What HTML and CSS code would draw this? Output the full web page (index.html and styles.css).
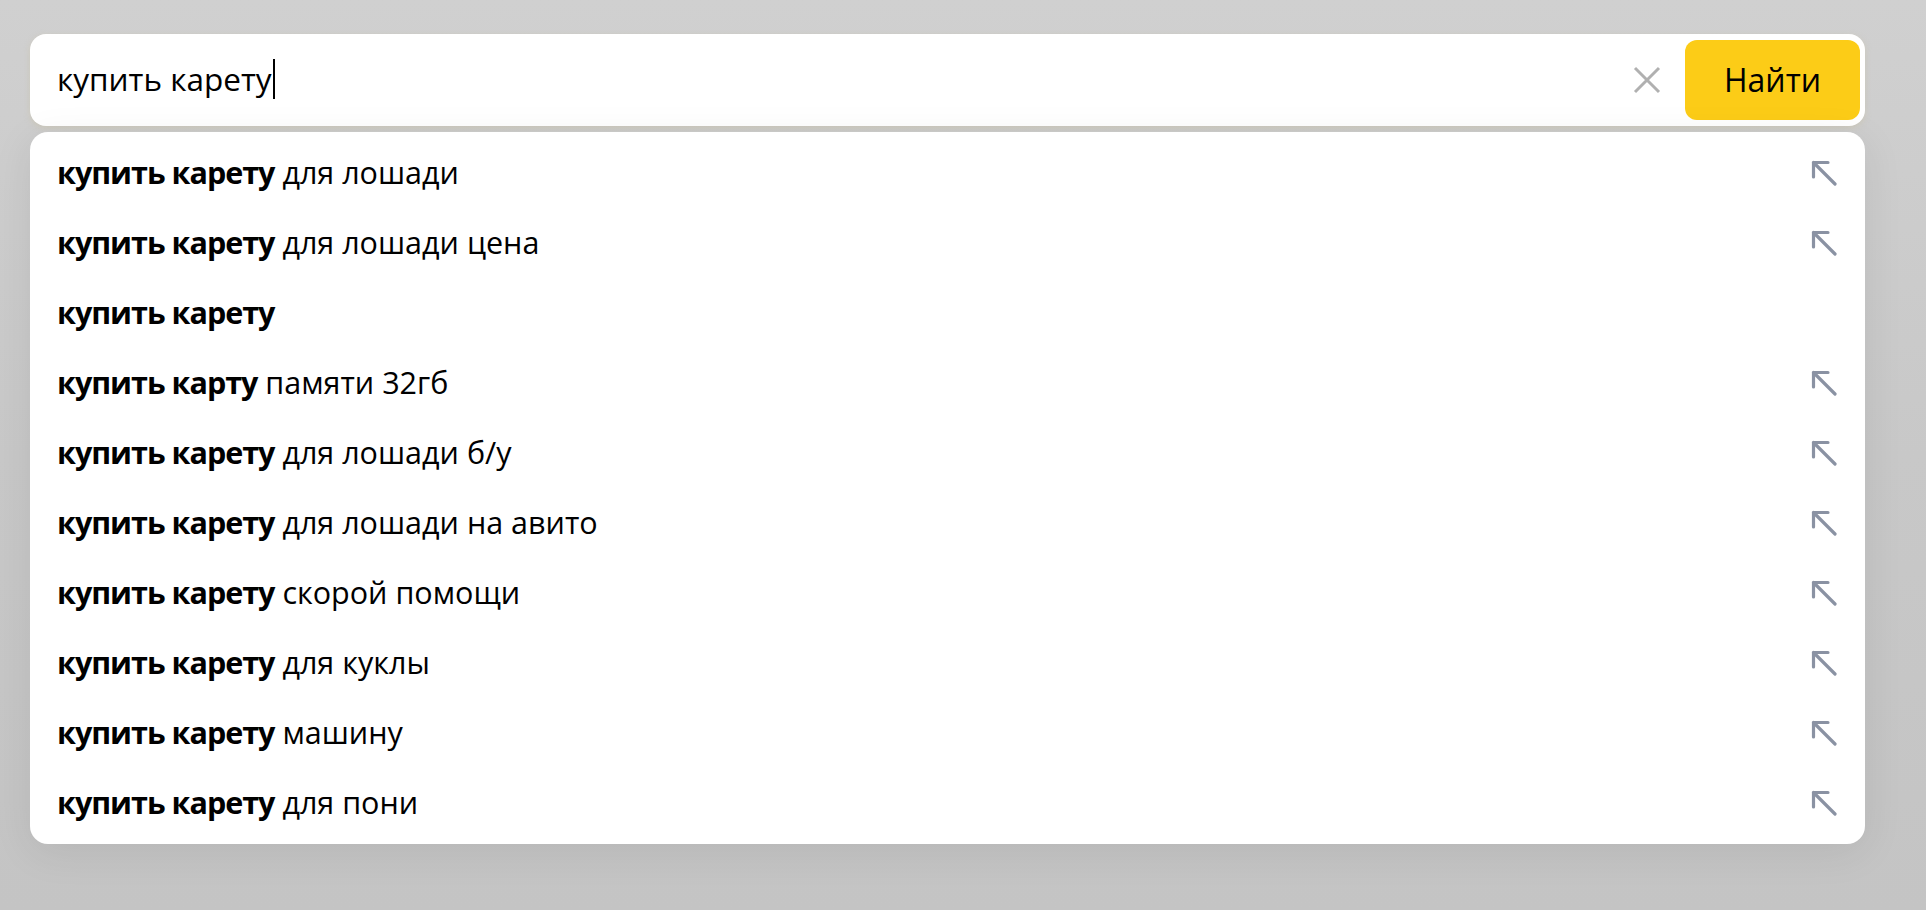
FILE: index.html
```html
<!DOCTYPE html>
<html lang="ru">
<head>
<meta charset="utf-8">
<title>Поиск</title>
<link rel="stylesheet" href="styles.css">
</head>
<body>
<div class="wrap">
  <form class="search">
    <div class="field"><span class="query">купить карету</span><span class="caret"></span></div>
    <span class="clear"><svg width="28" height="28" viewBox="0 0 28 28"><path d="M2 2 L26 26 M26 2 L2 26" stroke="#b0b0b0" stroke-width="3" fill="none"/></svg></span>
    <button class="btn" type="button">Найти</button>
  </form>
  <ul class="suggest">
    <li class="item"><span class="text"><b>купить карету</b> для лошади</span><span class="arrow"><svg width="26" height="26" viewBox="0 0 26 26"><path d="M2.5 17 V2.5 H17 M2.5 2.5 L24 24" stroke="#8a92a3" stroke-width="3.2" stroke-linecap="round" stroke-linejoin="round" fill="none"/></svg></span></li>
    <li class="item"><span class="text"><b>купить карету</b> для лошади цена</span><span class="arrow"><svg width="26" height="26" viewBox="0 0 26 26"><path d="M2.5 17 V2.5 H17 M2.5 2.5 L24 24" stroke="#8a92a3" stroke-width="3.2" stroke-linecap="round" stroke-linejoin="round" fill="none"/></svg></span></li>
    <li class="item"><span class="text"><b>купить карету</b></span></li>
    <li class="item"><span class="text"><b>купить карту</b> памяти 32гб</span><span class="arrow"><svg width="26" height="26" viewBox="0 0 26 26"><path d="M2.5 17 V2.5 H17 M2.5 2.5 L24 24" stroke="#8a92a3" stroke-width="3.2" stroke-linecap="round" stroke-linejoin="round" fill="none"/></svg></span></li>
    <li class="item"><span class="text"><b>купить карету</b> для лошади б/у</span><span class="arrow"><svg width="26" height="26" viewBox="0 0 26 26"><path d="M2.5 17 V2.5 H17 M2.5 2.5 L24 24" stroke="#8a92a3" stroke-width="3.2" stroke-linecap="round" stroke-linejoin="round" fill="none"/></svg></span></li>
    <li class="item"><span class="text"><b>купить карету</b> для лошади на авито</span><span class="arrow"><svg width="26" height="26" viewBox="0 0 26 26"><path d="M2.5 17 V2.5 H17 M2.5 2.5 L24 24" stroke="#8a92a3" stroke-width="3.2" stroke-linecap="round" stroke-linejoin="round" fill="none"/></svg></span></li>
    <li class="item"><span class="text"><b>купить карету</b> скорой помощи</span><span class="arrow"><svg width="26" height="26" viewBox="0 0 26 26"><path d="M2.5 17 V2.5 H17 M2.5 2.5 L24 24" stroke="#8a92a3" stroke-width="3.2" stroke-linecap="round" stroke-linejoin="round" fill="none"/></svg></span></li>
    <li class="item"><span class="text"><b>купить карету</b> для куклы</span><span class="arrow"><svg width="26" height="26" viewBox="0 0 26 26"><path d="M2.5 17 V2.5 H17 M2.5 2.5 L24 24" stroke="#8a92a3" stroke-width="3.2" stroke-linecap="round" stroke-linejoin="round" fill="none"/></svg></span></li>
    <li class="item"><span class="text"><b>купить карету</b> машину</span><span class="arrow"><svg width="26" height="26" viewBox="0 0 26 26"><path d="M2.5 17 V2.5 H17 M2.5 2.5 L24 24" stroke="#8a92a3" stroke-width="3.2" stroke-linecap="round" stroke-linejoin="round" fill="none"/></svg></span></li>
    <li class="item"><span class="text"><b>купить карету</b> для пони</span><span class="arrow"><svg width="26" height="26" viewBox="0 0 26 26"><path d="M2.5 17 V2.5 H17 M2.5 2.5 L24 24" stroke="#8a92a3" stroke-width="3.2" stroke-linecap="round" stroke-linejoin="round" fill="none"/></svg></span></li>
  </ul>
</div>
</body>
</html>
```

FILE: styles.css
```css
html, body {
  margin: 0;
  height: 100%;
}
body {
  background: linear-gradient(180deg, #d0d0d0 0%, #c8c8c8 50%, #c4c4c4 100%);
  font-family: "Open Sans", "Noto Sans", sans-serif;
  color: #000;
}
.wrap {
  padding: 34px 61px 0 30px;
  display: flex;
  flex-direction: column;
  gap: 6px;
}
.search {
  margin: 0;
  height: 92px;
  box-sizing: border-box;
  background: #fff;
  border-radius: 16px;
  display: flex;
  align-items: center;
  padding: 6px 5px 6px 27px;
  box-shadow: 0 2px 6px rgba(200, 190, 150, 0.35);
}
.field {
  flex: 1;
  display: flex;
  align-items: center;
  font-size: 31.5px;
  padding-bottom: 3px;
}
.caret {
  display: inline-block;
  width: 2px;
  height: 40px;
  background: #000;
  margin-left: 1px;
}
.clear {
  width: 28px;
  height: 28px;
  margin-right: 24px;
  display: flex;
}
.btn {
  width: 175px;
  height: 80px;
  border: 0;
  border-radius: 12px;
  background: #fccc17;
  font-family: inherit;
  font-size: 32px;
  color: #000;
  padding: 0 0 2px;
}
.suggest {
  list-style: none;
  margin: 0;
  padding: 6px 0;
  background: #fff;
  border-radius: 18px;
  box-shadow: 0 8px 40px rgba(0, 0, 0, 0.08);
}
.item {
  height: 70px;
  display: flex;
  align-items: center;
  justify-content: space-between;
  padding: 0 28px 0 27px;
  font-size: 30.5px;
}
.text {
  padding-bottom: 2px;
}
.item b {
  font-weight: 700;
  letter-spacing: -1px;
}
.arrow {
  width: 26px;
  height: 26px;
  display: flex;
}
```
